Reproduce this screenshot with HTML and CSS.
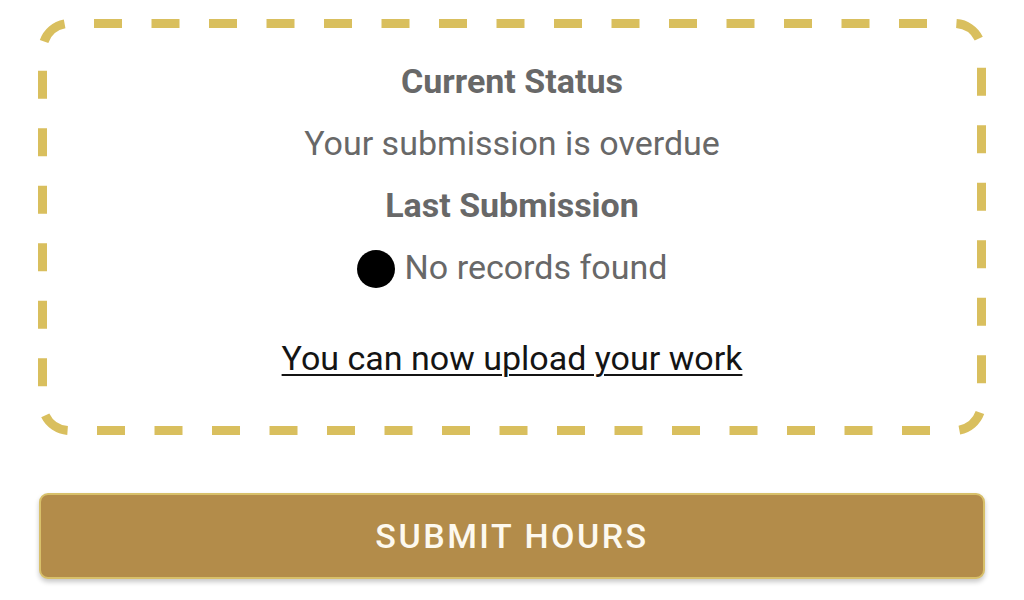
FILE: index.html
```html
<!DOCTYPE html>
<html lang="en">
<head>
<meta charset="utf-8">
<title>Status</title>
<link rel="stylesheet" href="styles.css">
</head>
<body>
<main class="page">
  <section class="status-card">
    <svg class="dash-frame" viewBox="0 0 948 416" preserveAspectRatio="none" aria-hidden="true">
      <rect x="4.5" y="4.5" width="939" height="407" rx="27" ry="27"/>
    </svg>
    <h2 class="label">Current Status</h2>
    <p class="value">Your submission is overdue</p>
    <h2 class="label">Last Submission</h2>
    <p class="value"><span class="dot"></span>No records found</p>
    <a class="upload-link" href="#">You can now upload your work</a>
  </section>
  <button class="submit-btn" type="button">SUBMIT HOURS</button>
</main>
</body>
</html>
```
FILE: styles.css
```css
html, body {
  margin: 0;
  padding: 0;
  background: #ffffff;
}
body {
  font-family: Roboto, "Noto Sans", Arial, sans-serif;
  width: 1024px;
  height: 600px;
  overflow: hidden;
}
.page {
  display: flex;
  flex-direction: column;
  padding: 19px 38px 0 38px;
}
.status-card {
  position: relative;
  box-sizing: border-box;
  width: 948px;
  height: 416px;
  padding: 31px 0 0 0;
  display: flex;
  flex-direction: column;
  align-items: center;
}
.dash-frame {
  position: absolute;
  left: 0;
  top: 0;
  width: 948px;
  height: 416px;
  overflow: visible;
}
.dash-frame rect {
  fill: none;
  stroke: #d9bf5e;
  stroke-width: 9;
  stroke-dasharray: 28 29.5;
  stroke-dashoffset: 33;
}
.label, .value {
  margin: 0;
  height: 62px;
  line-height: 62px;
  font-size: 34px;
  color: #686868;
  text-align: center;
}
.label {
  font-weight: 700;
}
.value {
  font-weight: 400;
  display: flex;
  align-items: center;
  justify-content: center;
}
.dot {
  display: inline-block;
  width: 38px;
  height: 38px;
  border-radius: 50%;
  background: #000;
  margin-right: 10px;
  margin-top: 4px;
}
.upload-link {
  margin-top: 29px;
  line-height: 62px;
  font-size: 34px;
  color: #141414;
  text-decoration: underline;
  text-decoration-thickness: 2px;
  text-underline-offset: 4px;
}
.submit-btn {
  margin-top: 58px;
  margin-left: 1px;
  width: 946px;
  height: 86px;
  box-sizing: border-box;
  background: #b38c4a;
  border: 2px solid #d8c06a;
  border-radius: 9px;
  box-shadow: 0 3px 5px rgba(0, 0, 0, 0.22);
  font-family: Roboto, "Noto Sans", Arial, sans-serif;
  font-weight: 500;
  font-size: 34px;
  letter-spacing: 2.5px;
  color: #fdf9ef;
  padding: 0;
}
```
